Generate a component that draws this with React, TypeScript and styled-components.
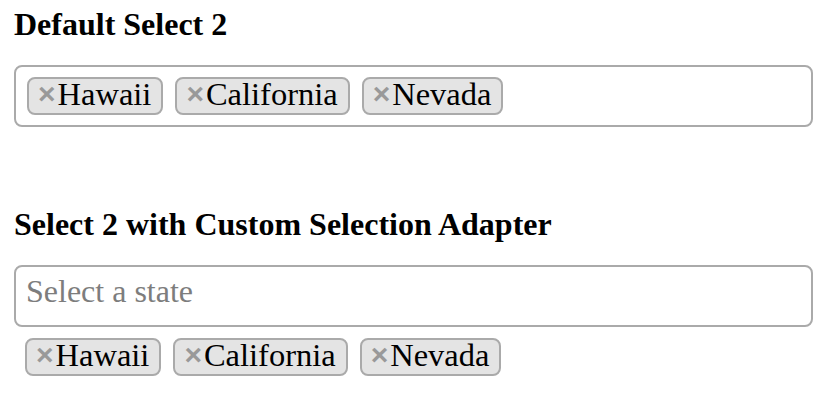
import React from "react";
import styled, { createGlobalStyle } from "styled-components";

const Global = createGlobalStyle`
  html, body { margin: 0; padding: 0; background: #fff; }
  body { font-family: "Liberation Serif", "Times New Roman", serif; color: #000; }
`;

const Page = styled.div`
  width: 799px;
  padding: 6px 0 0 14px;
  display: flex;
  flex-direction: column;
`;

const Heading = styled.h4<{ $top?: number }>`
  margin: ${(p) => p.$top ?? 0}px 0 23px 0;
  font-size: 32px;
  line-height: 36px;
  font-weight: bold;
`;

const SelectBox = styled.div`
  box-sizing: border-box;
  border: 2px solid #aaa;
  border-radius: 8px;
  background: #fff;
  min-height: 62px;
  display: flex;
  flex-wrap: wrap;
  align-items: flex-start;
  gap: 12px;
  padding: 10px 11px 10px 11px;
`;

const SearchBox = styled.div`
  box-sizing: border-box;
  border: 2px solid #aaa;
  border-radius: 8px;
  background: #fff;
  height: 62px;
  padding: 6px 10px 0 10px;
  font-size: 32px;
  line-height: 36px;
  color: #7d7d7d;
`;

const TagRow = styled.div`
  display: flex;
  gap: 12px;
  padding: 11px 0 0 11px;
`;

const Tag = styled.div`
  box-sizing: border-box;
  height: 38px;
  display: flex;
  align-items: flex-start;
  background: #e4e4e4;
  border: 2px solid #aaa;
  border-radius: 8px;
  padding: 0 10px 4px 9px;
  font-size: 32.5px;
  line-height: 30px;
  white-space: nowrap;
`;

const Remove = styled.span`
  color: #999;
  font-family: "Liberation Sans", Arial, sans-serif;
  font-weight: bold;
  font-size: 30px;
  margin-right: 2px;
`;

const states = ["Hawaii", "California", "Nevada"];

const Chips = () => (
  <>
    {states.map((s) => (
      <Tag key={s}>
        <Remove>×</Remove>
        {s}
      </Tag>
    ))}
  </>
);

export default function App() {
  return (
    <>
      <Global />
      <Page>
        <Heading>Default Select 2</Heading>
        <SelectBox>
          <Chips />
        </SelectBox>
        <Heading $top={79}>Select 2 with Custom Selection Adapter</Heading>
        <SearchBox>Select a state</SearchBox>
        <TagRow>
          <Chips />
        </TagRow>
      </Page>
    </>
  );
}
